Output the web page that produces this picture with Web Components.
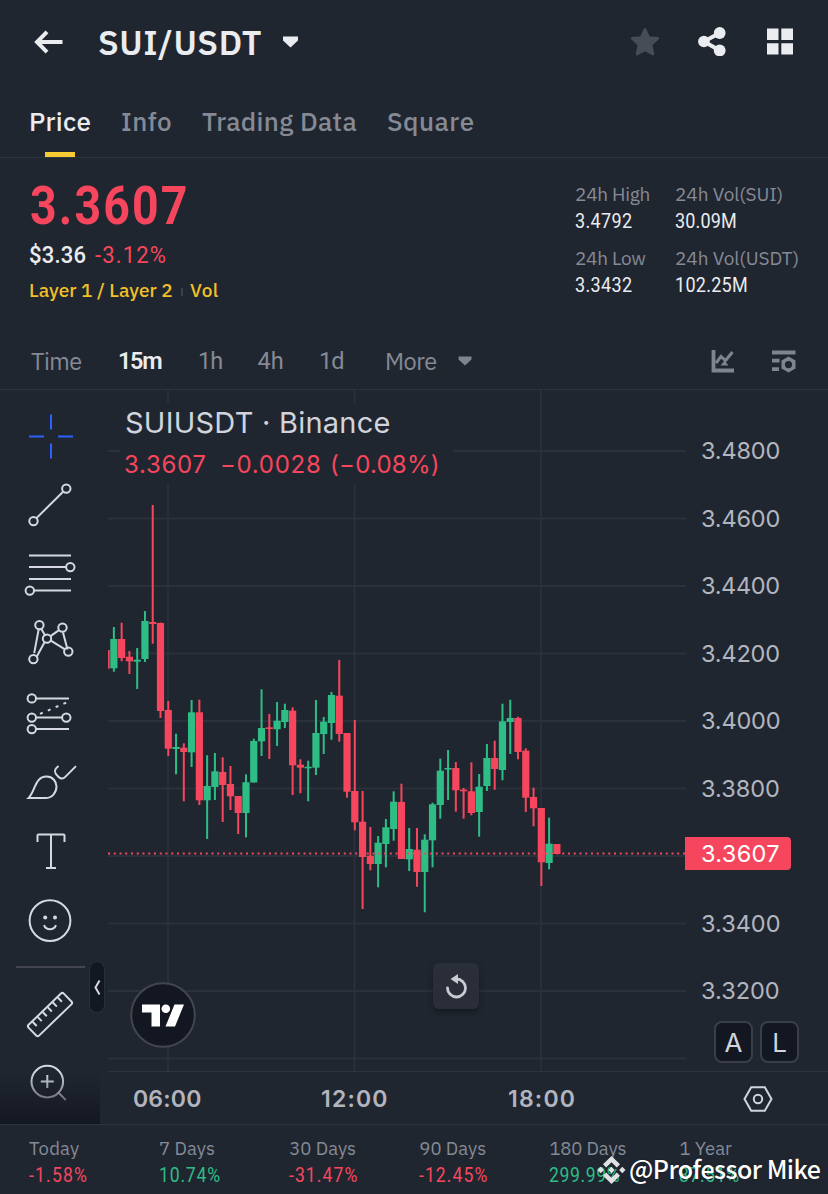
<!DOCTYPE html>
<html lang="en">
<head>
<meta charset="UTF-8">
<meta name="viewport" content="width=device-width, initial-scale=1.0">
<title>SUI/USDT</title>
<style>
    :root {
        --bg: #202630;
        --line: #2e343e;
        --text: #eaecef;
        --muted: #858a95;
        --red: #f6465d;
        --green: #2ebd85;
        --yellow: #f0c02a;
        --plex: "IBM Plex Sans", "Noto Sans", sans-serif;
        --din: Roboto, "Liberation Sans", sans-serif;
        --chart: Inter, "Liberation Sans", sans-serif;
    }

    body {
        margin: 0;
        width: 828px;
        height: 1194px;
        overflow: hidden;
        position: relative;
        background: var(--bg);
        color: var(--text);
        font-family: var(--plex);
    }
</style>
</head>
<body>
<pair-header><fit-text w="164">SUI/USDT</fit-text></pair-header>
<tab-bar></tab-bar>
<price-summary></price-summary>
<interval-bar></interval-bar>
<chart-panel></chart-panel>
<period-stats></period-stats>
<user-mark><fit-text w="191">@Professor Mike</fit-text></user-mark>

<script>
class PairHeader extends HTMLElement {
    constructor() {
        super();
        this.attachShadow({ mode: 'open' });
        this.shadowRoot.innerHTML = `
        <style>
            :host {
                display: flex;
                align-items: center;
                height: 84px;
                padding: 0 34px;
                box-sizing: border-box;
                font-size: 34px;
                font-weight: 600;
            }
            svg { display: block; flex: none; }
            .name { margin: 0 20px 0 35px; line-height: 40px; }
            .caret { margin-bottom: 1px; }
            .actions { display: flex; gap: 36px; margin-left: auto; }
        </style>
        <svg width="29" height="24" viewBox="0 0 29 24" fill="none" stroke="#eaecef" stroke-width="4"><path d="M28.500 12H4M13 1.800 3 12l10 10.200"/></svg>
        <div class="name"><slot></slot></div>
        <svg class="caret" width="17" height="12" viewBox="0 0 17 12" fill="#eaecef"><path d="M1 .5h15v4L8.500 11.500 1 4.500z"/></svg>
        <div class="actions">
            <svg width="32" height="32" viewBox="1 0 32 32" fill="#474d57" stroke="#474d57" stroke-width="2.600" stroke-linejoin="round"><path d="m16 3.300 3.700 8.200 9.200.900-6.900 6.300 2 9.400-8-4.300-8 4.300 2-9.400-6.900-6.300 9.200-.9z"/></svg>
            <svg width="30" height="30" viewBox="1 -1 30 30" fill="#eaecef"><path d="M7 14.500 22.700 6M7 14.500l15.700 9" stroke="#eaecef" stroke-width="4"/><circle cx="6.900" cy="14.500" r="5.800"/><circle cx="22.700" cy="6" r="5.900"/><circle cx="22.700" cy="23.500" r="5.900"/></svg>
            <svg width="30" height="30" viewBox="0 -.5 30 30" fill="#eaecef"><path d="M3 2h11.500v11.500H3zM17.300 2H29v11.500H17.300zM3 16.700h11.500V28H3zM17.300 16.700H29V28H17.300z"/></svg>
        </div>`;
    }
}

class TabBar extends HTMLElement {
    constructor() {
        super();
        this.attachShadow({ mode: 'open' });
        this.shadowRoot.innerHTML = `
        <style>
            :host {
                display: flex;
                gap: 30px;
                height: 74px;
                padding-left: 29px;
                box-sizing: border-box;
                border-bottom: 1px solid var(--line);
                font-size: 26px;
                font-weight: 500;
                color: var(--muted);
            }
            .tab {
                display: flex;
                flex-direction: column;
                align-items: center;
                justify-content: space-between;
                line-height: 36px;
                padding-top: 19px;
            }
            .on { color: var(--text); }
            .on::after { content: ""; width: 30px; height: 5px; background: #f6cb33; }
        </style>
        <div class="tab on"><fit-text w="62">Price</fit-text></div>
        <div class="tab"><fit-text w="51">Info</fit-text></div>
        <div class="tab"><fit-text w="155">Trading Data</fit-text></div>
        <div class="tab"><fit-text w="88">Square</fit-text></div>`;
    }
}

class PriceSummary extends HTMLElement {
    constructor() {
        super();
        this.attachShadow({ mode: 'open' });
        this.shadowRoot.innerHTML = `
        <style>
            :host {
                display: flex;
                justify-content: space-between;
                height: 178px;
                padding: 16px 29px 0;
                box-sizing: border-box;
            }
            .last { font: 700 54px/64px var(--din); color: var(--red); margin-left: 1px; }
            .sub { display: flex; gap: 9px; font: 500 24px/34px var(--din); }
            .sub .pct { color: var(--red); font-weight: 400; }
            .tags { display: flex; align-items: center; gap: 7.500px; font-size: 19px; font-weight: 500; line-height: 36px; color: var(--yellow); }
            .tags i { width: 2px; height: 8px; margin-top: 3px; background: #3a404a; }
            .day { display: flex; gap: 25px; font-size: 19px; line-height: 27px; padding-top: 7px; }
            .day div { display: flex; flex-direction: column; }
            .day .k { color: var(--muted); }
            .day .v { font-family: var(--din); font-size: 20px; margin-bottom: 9.500px; }
        </style>
        <div>
            <fit-text class="last" w="160" squeeze=".86">3.3607</fit-text>
            <div class="sub"><fit-text w="57" squeeze=".92">$3.36</fit-text><fit-text class="pct" w="72" squeeze=".92">-3.12%</fit-text></div>
            <div class="tags"><fit-text w="144">Layer 1 / Layer 2</fit-text><i></i><fit-text w="28">Vol</fit-text></div>
        </div>
        <div class="day">
            <div>
                <fit-text class="k" w="75">24h High</fit-text><fit-text class="v" w="57" squeeze=".9">3.4792</fit-text>
                <fit-text class="k" w="71">24h Low</fit-text><fit-text class="v" w="57" squeeze=".9">3.3432</fit-text>
            </div>
            <div>
                <fit-text class="k" w="108">24h Vol(SUI)</fit-text><fit-text class="v" w="62" squeeze=".9">30.09M</fit-text>
                <fit-text class="k" w="124">24h Vol(USDT)</fit-text><fit-text class="v" w="73" squeeze=".9">102.25M</fit-text>
            </div>
        </div>`;
    }
}

class IntervalBar extends HTMLElement {
    constructor() {
        super();
        this.attachShadow({ mode: 'open' });
        this.shadowRoot.innerHTML = `
        <style>
            :host {
                display: flex;
                align-items: center;
                height: 54px;
                margin-bottom: -1px;
                padding: 0 32px 3px 31px;
                box-sizing: border-box;
                border-bottom: 1px solid var(--line);
                font-size: 23.500px;
                line-height: 36px;
                color: var(--muted);
            }
            .on { font-family: var(--din); font-weight: 600; color: var(--text); margin: 0 37px 0 36px; }
            .num { font-family: var(--din); margin-right: 35.500px; }
            svg { fill: #7f8490; }
            .tools { display: flex; gap: 36px; margin-left: auto; }
        </style>
        <fit-text w="51">Time</fit-text>
        <fit-text class="on" w="43">15m</fit-text>
        <fit-text class="num" w="24">1h</fit-text>
        <fit-text class="num" w="26">4h</fit-text>
        <fit-text class="num" w="24" style="margin-right:42px">1d</fit-text>
        <fit-text w="52">More</fit-text>
        <svg width="14" height="10" viewBox="0 0 14 10" style="margin:0 0 1px 21px"><path d="M.5.5h13v3L7 9.500.5 3.500z"/></svg>
        <div class="tools">
            <svg width="24" height="24" viewBox="0 0 24 24"><path d="M2.500 1v20.500H23" fill="none" stroke="#7f8490" stroke-width="3.800"/><path d="m5 14 5-6.500 4.500 4L21.500 3" fill="none" stroke="#7f8490" stroke-width="3"/><path d="M9.500 16.500h8l-4-5z"/></svg>
            <svg width="25" height="24" viewBox="0 0 25 24"><path d="M1 1.500h23.500v4H1zM1 9.800h7.500v3.800H1zM1 18.300h7v3.800H1z"/><path fill-rule="evenodd" d="m17.500 7.500 7 4v8l-7 4-7-4v-8zM17.500 12a3.600 3.600 0 1 0 0 7.200 3.600 3.600 0 0 0 0-7.200z"/></svg>
        </div>`;
    }
}

// every tool is drawn around y = 0 in a 100 x 69 cell
const TOOLS = [
    '<path stroke="#2962ff" d="M51-22v15M51 7v15M29 0h15M58 0h15"/>',
    '<circle cx="33.500" cy="15.500" r="4.200"/><circle cx="66.300" cy="-17" r="4.200"/><path d="m36.500 12.500 26.800-26.600"/>',
    '<path d="M29-19h42M29-7.500h37M29 4.500h42M34 16h37"/><circle cx="70.300" cy="-7.500" r="4.200"/><circle cx="29.800" cy="16" r="4.200"/>',
    '<path d="m38.800-15-4.600 24.500M41.300-14.500l4.200 7M36.300 14l8.500-15.800M50.500-7.500l8.500-6M63-11l4.500 17M50-3.500l15 9.300"/><circle cx="39.400" cy="-18.500" r="4.200"/><circle cx="33.400" cy="15.500" r="4.200"/><circle cx="47" cy="-5" r="4.200"/><circle cx="62.500" cy="-16" r="4.200"/><circle cx="68.300" cy="8" r="4.200"/>',
    '<path d="M36-14.200h33M36 5h26M36 16.500h33"/><path d="m40 1.300 28-12" stroke-dasharray="3 5.500"/><circle cx="31.800" cy="-14.200" r="4.200"/><circle cx="31.800" cy="5" r="4.200"/><circle cx="66.300" cy="5" r="4.200"/><circle cx="31.800" cy="16.500" r="4.200"/>',
    '<path d="M28.500 16.500C35 10 35-5 46.500-5 53-5 56.500 0 56.500 5c0 6-4.500 11.500-11 11.500zM58.500-15.500c-5 4-4 6-2.500 8 3 4 6 6 9 3L76-15.500"/>',
    '<path d="M37.500-9.500V-16q0-1 1-1h25q1 0 1 1v6.500M51-17v33M46 16.500h10"/>',
    '<circle cx="50" cy="0" r="20.400"/><path d="M44 4.500c2 5.500 10 5.500 12 0"/><circle cx="45.200" cy="-3" r="2" fill="#d5d8e0" stroke="none"/><circle cx="55" cy="-3" r="2" fill="#d5d8e0" stroke="none"/>',
    '<g transform="translate(50 0) rotate(-44)"><rect x="-24.500" y="-7.500" width="49" height="15" rx="2"/><path d="M-17.500-7v6M-10.500-7v6M-3.500-7v6M3.500-7v6M10.500-7v6M17.500-7v6"/></g>',
    '<circle cx="47.300" cy="-2" r="15.800"/><path d="M47.300-8.500v13M40.800-2h13M58 8.500l7.800 8"/>'
];

class DrawingToolbar extends HTMLElement {
    constructor() {
        super();
        this.attachShadow({ mode: 'open' });
        const cells = TOOLS.map(t => `<svg viewBox="0 -34.500 100 69">${t}</svg>`);
        this.shadowRoot.innerHTML = `
        <style>
            :host {
                display: block;
                position: relative;
                width: 108px;
                height: 736px;
                padding-top: 12.500px;
                box-sizing: border-box;
            }
            svg { display: block; width: 100px; height: 69.200px; fill: none; stroke: #d5d8e0; stroke-width: 2; }
            hr { width: 69px; height: 2px; border: 0; margin: 11px 0 12px 15.500px; background: #434651; }
            .fade { position: absolute; left: 0; bottom: 1px; width: 100px; height: 52px; background: linear-gradient(rgba(19, 23, 34, 0), #131722); }
            .handle {
                position: absolute;
                left: 90px;
                top: 573px;
                width: 14px;
                height: 50px;
                border-radius: 8px;
                background: #131722;
                box-shadow: 0 0 0 1px #2a2e39;
            }
            .handle svg { width: 14px; height: 50px; }
        </style>
        ${cells.slice(0, 8).join('')}
        <hr>
        ${cells.slice(8).join('')}
        <div class="fade"></div>
        <div class="handle"><svg viewBox="0 0 14 50"><path d="M9.500 18.500 5.500 25.500l4 7"/></svg></div>`;
    }
}

// [up, open/close top, open/close bottom, high, low]
const CANDLES = [
    [0, 650, 668.7, 650, 668.7], [1, 639, 668.3, 627, 671.7], [0, 639, 658, 622.7, 661.3],
    [0, 656.7, 661.3, 651, 674], [1, 659.7, 661.7, 648, 689], [1, 621, 659, 611, 662],
    [0, 622, 624, 505, 643.7], [0, 623, 711, 622.5, 718], [0, 710, 748.7, 701, 756],
    [1, 747, 749, 733.7, 774.3], [0, 747.7, 752, 743.3, 801.3], [1, 712.3, 752.3, 700, 767],
    [0, 712.3, 800.3, 699.7, 805], [1, 786, 800.3, 755.3, 839], [1, 771.3, 787, 753, 800],
    [0, 772, 785, 757.3, 822], [0, 784, 796.3, 766, 810], [0, 796, 813, 796, 834],
    [1, 782.3, 813, 774.3, 837.3], [1, 741, 782.5, 738.7, 782.5], [1, 728, 741.3, 689.3, 756],
    [0, 727.3, 729, 714, 759], [1, 720.7, 729.3, 702, 746], [1, 710, 722, 703.7, 728],
    [0, 710.7, 765.3, 707.3, 795], [0, 764.7, 767.7, 759.3, 793.3], [1, 766.7, 768.3, 760.7, 801.3],
    [1, 733, 767.7, 700, 775], [1, 721.7, 734, 717, 754], [1, 695, 723, 692, 739.7],
    [0, 695.7, 734, 660, 741.7], [0, 733, 791.7, 733, 797.7], [0, 791, 822.3, 720, 830.3],
    [0, 821.7, 857, 791, 909], [0, 855.7, 864, 827, 870.3], [1, 842.7, 864, 836, 887.3],
    [1, 827.3, 844, 819, 867.3], [1, 801.7, 829, 791.3, 840.7], [0, 802, 859, 783.7, 859],
    [1, 849, 859.3, 828, 871], [0, 849.7, 872, 828, 886.7], [1, 839.7, 872, 834.3, 912.3],
    [1, 804.3, 840.3, 802.7, 867.3], [1, 770.7, 805, 758.7, 818.7], [1, 768, 769.5, 750, 800],
    [0, 768, 790.3, 762, 811.7], [0, 789.7, 791.3, 788, 818.7], [0, 791.3, 813, 762.3, 815.3],
    [1, 786.7, 812, 774, 836.7], [1, 758, 786, 744, 791], [0, 758, 769, 740.7, 789.7],
    [1, 721.3, 770, 703.7, 780.3], [1, 718, 722, 699.7, 754], [0, 718, 752, 716.7, 759.3],
    [0, 750.7, 797.7, 748.3, 812], [0, 797, 808.3, 787.7, 826.3], [0, 808, 862.3, 808, 886],
    [1, 843.7, 863, 817.7, 869.3], [0, 844, 854, 844, 854]
];

class PricePlot extends HTMLElement {
    constructor() {
        super();
        this.attachShadow({ mode: 'open' });

        let grid = '';
        for (let i = 0; i < 10; i++) grid += `M108 ${451 + i * 67.5}h578`;
        for (const x of [168, 354.5, 541]) grid += `M${x} 389v682`;

        const bars = CANDLES.map(([up, top, bottom, high, low], i) => {
            const x = 106.1 + i * 7.772;
            const fill = up ? 'var(--green)' : 'var(--red)';
            return `<g fill="${fill}"><rect x="${x - 1}" y="${high}" width="2" height="${low - high}"/>` +
                `<rect x="${x - 3.6}" y="${top}" width="7.200" height="${bottom - top}"/></g>`;
        }).join('');

        this.shadowRoot.innerHTML = `
        <style>
            :host { display: block; position: relative; width: 578px; height: 683px; font-family: var(--chart); }
            svg { display: block; }
            .legend { position: absolute; left: 12px; top: 14px; display: flex; flex-direction: column; align-items: flex-start; }
            .legend div { display: flex; background: var(--bg); padding: 0 5px; }
            .title { font-size: 29px; line-height: 39px; color: #d1d4dc; }
            .legend .change { gap: 13px; font-size: 24px; line-height: 36px; padding: 5px 5px 1px 4px; color: var(--red); width: 324px; }
            .tv { position: absolute; left: 22px; top: 593px; }
            .reset {
                position: absolute;
                left: 325px;
                top: 574px;
                width: 46px;
                height: 46px;
                border-radius: 6px;
                background: #2a2e39;
                box-shadow: 0 3px 6px rgba(0, 0, 0, .35);
            }
        </style>
        <svg width="578" height="683" viewBox="108 389 578 683">
            <path d="${grid}" fill="none" stroke="#2b313b" stroke-width="1.800"/>
            ${bars}
            <path d="M108 853.500H686" stroke="#f6465d" stroke-width="2" stroke-dasharray="2 3.750"/>
        </svg>
        <div class="legend">
            <div class="title"><fit-text w="266">SUIUSDT · Binance</fit-text></div>
            <div class="change"><fit-text w="83">3.3607</fit-text><fit-text w="101">−0.0028</fit-text><fit-text w="110" style="margin-left:-4px">(−0.08%)</fit-text></div>
        </div>
        <svg class="tv" width="66" height="66" viewBox="0 0 66 66">
            <circle cx="33" cy="33" r="31.800" fill="#131722" stroke="#434651" stroke-width="2"/>
            <path d="M12 22.500h18V44.500h-8.500V30.500H12zM44.500 22.500H54L45 44.500h-9.500z" fill="#fff"/>
            <circle cx="35.800" cy="26.800" r="4.300" fill="#fff"/>
        </svg>
        <div class="reset"><svg width="46" height="46" viewBox="0 0 46 46"><path d="M14.500 25a9 9 0 1 0 9-9" fill="none" stroke="#c8cbd2" stroke-width="2.800" stroke-linecap="round"/><path d="M17.500 16 25 11v10z" fill="#c8cbd2"/></svg></div>`;
    }
}

class PriceAxis extends HTMLElement {
    constructor() {
        super();
        this.attachShadow({ mode: 'open' });
        // the last price tag covers the 3.3600 row
        const rows = ['3.4800', '3.4600', '3.4400', '3.4200', '3.4000', '3.3800', '', '3.3400', '3.3200']
            .map(p => `<div class="row">${p ? `<fit-text w="79">${p}</fit-text>` : ''}</div>`).join('');
        this.shadowRoot.innerHTML = `
        <style>
            :host {
                display: block;
                position: relative;
                width: 142px;
                height: 683px;
                padding-top: 28px;
                box-sizing: border-box;
                font: 400 23.500px/67.500px var(--chart);
                color: #b2b5be;
            }
            .row { height: 67.500px; padding-left: 15px; }
            .tag {
                position: absolute;
                left: -1px;
                top: 448px;
                width: 106px;
                height: 33px;
                padding-left: 16px;
                box-sizing: border-box;
                line-height: 33px;
                border-radius: 0 4px 4px 0;
                background: var(--red);
                color: #fff;
            }
            .modes { position: absolute; left: 28px; top: 632px; display: flex; gap: 7px; }
            .modes span {
                width: 39px;
                height: 42px;
                box-sizing: border-box;
                border: 2px solid #3a3e49;
                border-radius: 8px;
                background: #131722;
                color: #d1d4dc;
                font-size: 26px;
                line-height: 40px;
                text-align: center;
            }
        </style>
        ${rows}
        <div class="tag"><fit-text w="79">3.3607</fit-text></div>
        <div class="modes"><span>A</span><span>L</span></div>`;
    }
}

class TimeAxis extends HTMLElement {
    constructor() {
        super();
        this.attachShadow({ mode: 'open' });
        this.shadowRoot.innerHTML = `
        <style>
            :host {
                display: flex;
                align-items: center;
                gap: 119px;
                height: 53px;
                margin-top: -1px;
                padding: 2px 55px 0 25px;
                box-sizing: border-box;
                border-top: 1px solid var(--line);
                font: 600 23px/50px var(--chart);
                color: #b2b5be;
            }
            svg { margin: 0 0 1px auto; }
        </style>
        <fit-text w="69">06:00</fit-text>
        <fit-text w="68">12:00</fit-text>
        <fit-text w="68">18:00</fit-text>
        <svg width="30" height="26" viewBox="0 0 30 26" fill="none" stroke="#d1d4dc" stroke-width="2"><path d="M8.200 1.200h13.600L28.500 13l-6.700 11.800H8.200L1.500 13z"/><circle cx="15" cy="13" r="4.200"/></svg>`;
    }
}

class ChartPanel extends HTMLElement {
    constructor() {
        super();
        this.attachShadow({ mode: 'open' });
        this.shadowRoot.innerHTML = `
        <style>
            :host { display: flex; height: 736px; }
            .main { flex: 1; display: flex; flex-direction: column; }
            .top { display: flex; }
        </style>
        <drawing-toolbar></drawing-toolbar>
        <div class="main">
            <div class="top"><price-plot></price-plot><price-axis></price-axis></div>
            <time-axis></time-axis>
        </div>`;
    }
}

class PeriodStats extends HTMLElement {
    constructor() {
        super();
        this.attachShadow({ mode: 'open' });
        const items = [
            ['Today', 51, '-1.58%', 59],
            ['7 Days', 56, '10.74%', 62],
            ['30 Days', 67, '-31.47%', 69],
            ['90 Days', 67, '-12.45%', 69],
            ['180 Days', 77, '299.99%', 71],
            ['1 Year', 52, '87.51%', 61]
        ];
        this.shadowRoot.innerHTML = `
        <style>
            :host {
                display: grid;
                grid-template-columns: repeat(6, 130.100px);
                height: 70px;
                margin-top: -1px;
                padding: 10px 0 0 29px;
                box-sizing: border-box;
                border-top: 1px solid var(--line);
                font-size: 18.500px;
                line-height: 26.500px;
                color: var(--muted);
            }
            .v { font-family: var(--din); font-size: 20px; }
            .up { color: var(--green); }
            .down { color: var(--red); }
        </style>
        ${items.map(([label, lw, value, vw]) => `<div>
            <fit-text w="${lw}">${label}</fit-text>
            <fit-text class="v ${value[0] === '-' ? 'down' : 'up'}" w="${vw}" squeeze=".88">${value}</fit-text>
        </div>`).join('')}`;
    }
}

class UserMark extends HTMLElement {
    constructor() {
        super();
        this.attachShadow({ mode: 'open' });
        this.shadowRoot.innerHTML = `
        <style>
            :host {
                position: absolute;
                right: 8px;
                bottom: 8px;
                display: flex;
                align-items: center;
                gap: 3px;
                font: 500 25px/36px "Noto Sans CJK SC", "Noto Sans", sans-serif;
                color: #fff;
                text-shadow: 0 0 2px rgba(0, 0, 0, .4);
            }
            svg { margin-top: 3px; }
        </style>
        <svg width="29" height="30" viewBox="0 0 29 30" fill="#dfe1e5"><path d="m14.500 1 8.500 8.300-3.200 3.200-5.300-5.200-5.300 5.200L6 9.300zM14.500 29 6 20.700l3.200-3.200 5.300 5.200 5.300-5.200 3.200 3.200zM14.500 11.800l3.200 3.200-3.200 3.200-3.200-3.200zM3.700 11.800 6.900 15l-3.200 3.200L.5 15zM25.300 11.800l3.200 3.200-3.200 3.200-3.200-3.200z"/></svg>
        <slot></slot>`;
    }
}

// sets its text to an exact width by tracking; "squeeze" narrows the glyphs too
class FitText extends HTMLElement {
    constructor() {
        super();
        this.attachShadow({ mode: 'open' });
        this.shadowRoot.innerHTML = `
        <style>
            :host { display: block; flex: none; white-space: nowrap; }
            span { display: inline-block; transform-origin: 0 50%; }
        </style>
        <span><slot></slot></span>`;
    }

    connectedCallback() {
        const span = this.shadowRoot.querySelector('span');
        const width = Number(this.getAttribute('w'));
        const squeeze = Number(this.getAttribute('squeeze')) || 1;
        this.style.width = width + 'px';
        const spare = width / squeeze - span.offsetWidth;
        span.style.letterSpacing = spare / this.textContent.length + 'px';
        span.style.transform = squeeze === 1 ? '' : `scaleX(${squeeze})`;
    }
}

customElements.define('pair-header', PairHeader);
customElements.define('tab-bar', TabBar);
customElements.define('price-summary', PriceSummary);
customElements.define('interval-bar', IntervalBar);
customElements.define('drawing-toolbar', DrawingToolbar);
customElements.define('price-plot', PricePlot);
customElements.define('price-axis', PriceAxis);
customElements.define('time-axis', TimeAxis);
customElements.define('chart-panel', ChartPanel);
customElements.define('period-stats', PeriodStats);
customElements.define('user-mark', UserMark);
customElements.define('fit-text', FitText);
</script>
</body>
</html>
